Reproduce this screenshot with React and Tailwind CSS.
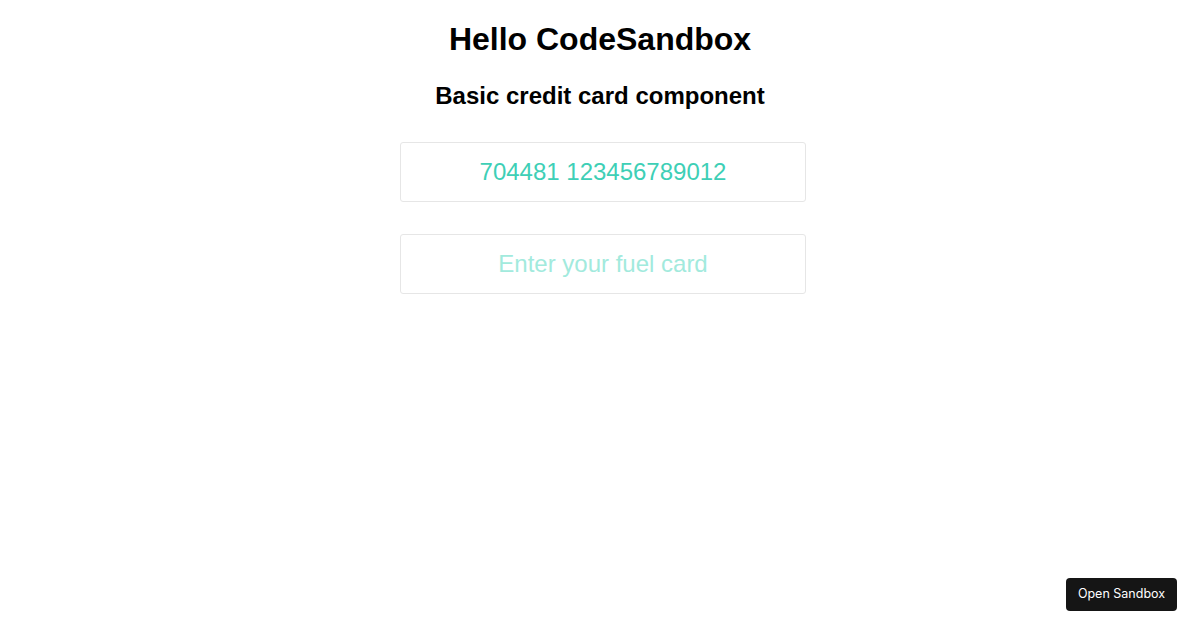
export default function App() {
  return (
    <div className="relative min-h-[630px] bg-white text-black">
      <div className="flex flex-col items-center font-['Liberation_Sans',Arial,sans-serif]">
        <h1 className="mt-[21px] text-[32px] leading-[37px] font-bold">Hello CodeSandbox</h1>
        <h2 className="mt-[24px] text-[24px] leading-[28px] font-bold">Basic credit card component</h2>
        <input
          readOnly
          value="704481 123456789012"
          className="mt-[32px] ml-[6px] w-[406px] h-[60px] rounded-[3px] border border-[#e6e6e6] text-center text-[24px] text-[#3ecfb6] outline-none font-['Liberation_Sans',Arial,sans-serif]"
        />
        <input
          placeholder="Enter your fuel card"
          className="mt-[32px] ml-[6px] w-[406px] h-[60px] rounded-[3px] border border-[#e6e6e6] text-center text-[24px] text-[#3ecfb6] placeholder:text-[#a2eadd] outline-none font-['Liberation_Sans',Arial,sans-serif]"
        />
      </div>
      <div className="absolute right-[23px] bottom-[19px] flex h-[33px] w-[111px] items-center justify-center rounded-[4px] bg-[#151515] text-[12.5px] text-white font-['Inter',sans-serif]">
        Open Sandbox
      </div>
    </div>
  );
}
